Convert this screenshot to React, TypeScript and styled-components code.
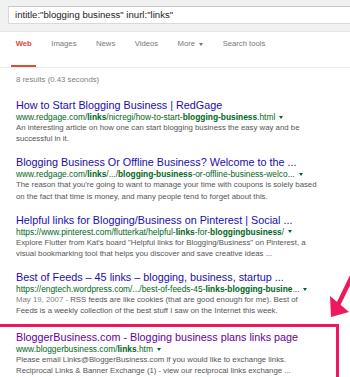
import React from "react";
import styled, { createGlobalStyle } from "styled-components";

const Global = createGlobalStyle`
  html, body { margin: 0; padding: 0; background: #fff; }
  body { font-family: "Liberation Sans", Arial, sans-serif; }
`;

const Page = styled.div`
  position: relative;
  width: 350px;
  height: 377px;
  overflow: hidden;
  background: #fff;
`;

const Header = styled.div`
  background: #f1f1f1;
  height: 32px;
  padding: 5.5px 0 0 8px;
  box-sizing: border-box;
  border-bottom: 1px solid #e6e6e6;
`;

const SearchBox = styled.div`
  height: 18.5px;
  box-sizing: border-box;
  background: #fff;
  border: 1px solid #d9d9d9;
  border-top-color: #c6c6c6;
  border-right: none;
  padding-left: 6px;
  display: flex;
  align-items: center;
  font-size: 9.6px;
  color: #222;
  white-space: nowrap;
`;

const TabBar = styled.div`
  display: flex;
  gap: 10.5px;
  padding-left: 11.2px;
  border-bottom: 1px solid #ebebeb;
`;

const Tab = styled.div<{ $active?: boolean }>`
  padding: 6px 4.5px 15px;
  line-height: 12px;
  font-size: 7.7px;
  color: ${(p) => (p.$active ? "#dd4b39" : "#777")};
  font-weight: ${(p) => (p.$active ? "bold" : "normal")};
  border-bottom: 2px solid ${(p) => (p.$active ? "#dd4b39" : "transparent")};
  display: flex;
  align-items: center;
  white-space: nowrap;
`;

const Caret = styled.span<{ $color: string }>`
  display: inline-block;
  width: 0;
  height: 0;
  border-left: 2.5px solid transparent;
  border-right: 2.5px solid transparent;
  border-top: 3px solid ${(p) => p.$color};
  margin-left: 4px;
  vertical-align: middle;
`;

const Results = styled.div`
  padding-left: 16px;
`;

const Count = styled.div`
  font-size: 7.8px;
  line-height: 12px;
  color: #808080;
  margin: 6px 0 13px;
`;

const Result = styled.div`
  margin-bottom: 12px;
  white-space: nowrap;
`;

const Title = styled.div<{ $visited?: boolean }>`
  font-size: 10.8px;
  line-height: 13px;
  color: ${(p) => (p.$visited ? "#660099" : "#1a0dab")};
`;

const Url = styled.div`
  font-size: 8.4px;
  line-height: 10px;
  color: #006621;
  display: flex;
  align-items: center;
  b { font-weight: bold; }
`;

const Snippet = styled.div`
  font-size: 7.8px;
  line-height: 11.2px;
  color: #545454;
`;

const DateText = styled.span`
  color: #808080;
`;

const Highlight = styled.div`
  margin: -5px 0 0 -20px;
  width: 343px;
  box-sizing: border-box;
  border: 3px solid #f0175d;
  border-bottom: none;
  padding: 4.5px 0 0 17px;
  white-space: nowrap;
`;

const Rule = styled.div`
  margin-left: -17px;
  height: 2px;
  background: #dcdcdc;
`;

const Arrow = styled.svg`
  position: absolute;
  left: 0;
  top: 0;
  pointer-events: none;
`;

const results = [
  {
    title: "How to Start Blogging Business | RedGage",
    url: (
      <>
        www.redgage.com/<b>links</b>/nicregi/how-to-start-<b>blogging-business</b>.html
      </>
    ),
    snippet: [
      "An interesting article on how one can start blogging business the easy way and be",
      "successful in it.",
    ],
  },
  {
    title: "Blogging Business Or Offline Business? Welcome to the ...",
    url: (
      <>
        www.redgage.com/<b>links</b>/.../<b>blogging-business</b>-or-offline-business-welco...
      </>
    ),
    snippet: [
      "The reason that you're going to want to manage your time with coupons is solely based",
      "on the fact that time is money, and many people tend to forget about this.",
    ],
  },
  {
    title: "Helpful links for Blogging/Business on Pinterest | Social ...",
    url: (
      <>
        https://www.pinterest.com/flutterkat/helpful-<b>links</b>-for-<b>bloggingbusiness</b>/
      </>
    ),
    snippet: [
      "Explore Flutter from Kat's board \"Helpful links for Blogging/Business\" on Pinterest, a",
      "visual bookmarking tool that helps you discover and save creative ideas ...",
    ],
  },
  {
    title: "Best of Feeds – 45 links – blogging, business, startup ...",
    url: (
      <>
        https://engtech.wordpress.com/.../best-of-feeds-45-<b>links-blogging-busine</b>...
      </>
    ),
    date: "May 19, 2007 - ",
    snippet: [
      "RSS feeds are like cookies (that are good enough for me). Best of",
      "Feeds is a weekly collection of the best stuff I saw on the Internet this week.",
    ],
  },
];

export default function App() {
  return (
    <Page>
      <Global />
      <Header>
        <SearchBox>intitle:"blogging business" inurl:"links"</SearchBox>
      </Header>
      <TabBar>
        <Tab $active>Web</Tab>
        <Tab>Images</Tab>
        <Tab>News</Tab>
        <Tab>Videos</Tab>
        <Tab>
          More<Caret $color="#777" />
        </Tab>
        <Tab>Search tools</Tab>
      </TabBar>
      <Results>
        <Count>8 results (0.43 seconds)</Count>
        {results.map((r, i) => (
          <Result key={i}>
            <Title>{r.title}</Title>
            <Url>
              <span>{r.url}</span>
              <Caret $color="#006621" />
            </Url>
            <Snippet>
              {r.date && <DateText>{r.date}</DateText>}
              {r.snippet[0]}
              <br />
              {r.snippet[1]}
            </Snippet>
          </Result>
        ))}
        <Highlight>
          <Title $visited>BloggerBusiness.com - Blogging business plans links page</Title>
          <Url>
            <span>
              www.bloggerbusiness.com/<b>links</b>.htm
            </span>
            <Caret $color="#006621" />
          </Url>
          <Snippet>
            Please email Links@BloggerBusiness.com if you would like to exchange links.
            <br />
            Reciprocal Links &amp; Banner Exchange (1) - view our reciprocal links exchange ...
          </Snippet>
          <Rule />
        </Highlight>
      </Results>
      <Arrow width="350" height="377" viewBox="0 0 350 377">
        <line x1="356" y1="268" x2="337" y2="307" stroke="#f0175d" strokeWidth="4.5" />
        <polygon points="331,317 330,296 349,312" fill="#f0175d" />
      </Arrow>
    </Page>
  );
}
